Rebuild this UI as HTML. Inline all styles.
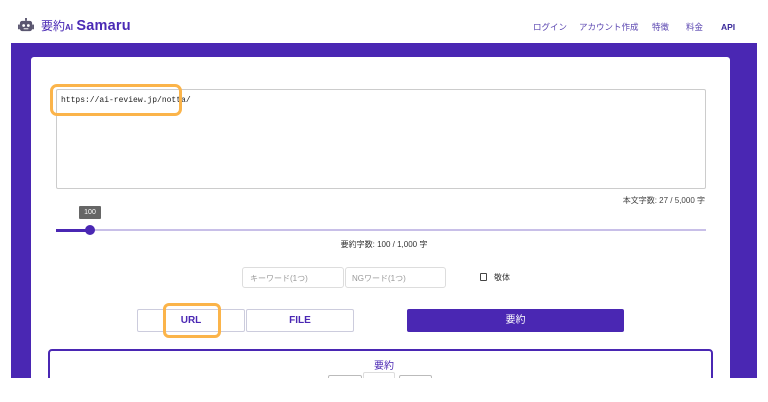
<!DOCTYPE html>
<html><head><meta charset="utf-8"><style>
*{margin:0;padding:0;box-sizing:border-box}
body{width:768px;height:402px;background:#fff;position:relative;overflow:hidden;font-family:"Liberation Sans","Noto Sans CJK JP",sans-serif}
.a{position:absolute}
.n{position:absolute;top:21px;font-size:8.5px;color:#5a45b0;white-space:nowrap;line-height:12px}
</style></head><body>
<svg class="a" style="left:18px;top:18px" width="16" height="15" viewBox="0 0 17 16"><rect x="7.5" y="0" width="2" height="3" fill="#5a5670"/><rect x="2" y="3" width="13" height="11" rx="2.5" fill="#5a5670"/><rect x="0" y="7" width="2" height="5" fill="#5a5670"/><rect x="15" y="7" width="2" height="5" fill="#5a5670"/><circle cx="6" cy="8" r="1.5" fill="#fff"/><circle cx="11" cy="8" r="1.5" fill="#fff"/><rect x="6" y="11" width="5" height="1" fill="#fff"/></svg>
<div class="a" style="left:41px;top:17px;font-size:12px;color:#4a2ab5;white-space:nowrap;line-height:18px">要約<b style="font-size:8px">AI</b> <b style="font-size:14.5px;letter-spacing:.2px">Samaru</b></div>
<div class="n" style="left:533px">ログイン</div>
<div class="n" style="left:579px">アカウント作成</div>
<div class="n" style="left:652px">特徴</div>
<div class="n" style="left:686px">料金</div>
<div class="n" style="left:721px;color:#3a2a9a;font-weight:bold">API</div>
<div class="a" style="left:11px;top:43px;width:746px;height:335px;background:#4a27b3"></div>
<div class="a" style="left:31px;top:57px;width:699px;height:321px;background:#fff;border-radius:3px 3px 0 0"></div>
<div class="a" style="left:56px;top:89px;width:650px;height:100px;border:1px solid #ccc;border-radius:2px"></div>
<div class="a" style="left:61px;top:96px;font-family:'Liberation Mono',monospace;font-size:8px;color:#222">https://ai-review.jp/notta/</div>
<div class="a" style="left:50px;top:84px;width:132px;height:32px;border:3px solid #fbb44a;border-radius:7px"></div>
<div class="a" style="right:63px;top:195px;font-size:8px;color:#444">本文字数: 27 / 5,000 字</div>
<div class="a" style="left:79px;top:206px;width:22px;height:13px;background:#666;color:#fff;font-size:7px;text-align:center;line-height:13px;border-radius:1px">100</div>
<div class="a" style="left:56px;top:229px;width:650px;height:2px;background:#c8bfe8"></div>
<div class="a" style="left:56px;top:229px;width:34px;height:3px;background:#4a27b3"></div>
<div class="a" style="left:85px;top:225px;width:10px;height:10px;border-radius:50%;background:#4a27b3"></div>
<div class="a" style="left:0;width:768px;top:239px;text-align:center;font-size:8px;color:#333">要約字数: 100 / 1,000 字</div>
<div class="a" style="left:242px;top:267px;width:102px;height:21px;border:1px solid #ddd;border-radius:3px;font-size:8px;color:#999;padding:5px 7px">キーワード(1つ)</div>
<div class="a" style="left:345px;top:267px;width:101px;height:21px;border:1px solid #ddd;border-radius:3px;font-size:8px;color:#999;padding:5px 6px">NGワード(1つ)</div>
<div class="a" style="left:480px;top:273px;width:7px;height:8px;border:1px solid #444;border-radius:1px"></div>
<div class="a" style="left:494px;top:272px;font-size:8px;color:#333">敬体</div>
<div class="a" style="left:137px;top:309px;width:108px;height:23px;border:1px solid #ccd;border-radius:2px;text-align:center;line-height:22px;font-size:10px;color:#4a27b3;font-weight:bold">URL</div>
<div class="a" style="left:246px;top:309px;width:108px;height:23px;border:1px solid #ccd;border-radius:2px;text-align:center;line-height:22px;font-size:10px;color:#4a27b3;font-weight:bold">FILE</div>
<div class="a" style="left:407px;top:309px;width:217px;height:23px;background:#4a27b3;border-radius:2px;text-align:center;line-height:23px;font-size:10px;color:#fff">要約</div>
<div class="a" style="left:163px;top:303px;width:58px;height:35px;border:3px solid #fbb44a;border-radius:6px"></div>
<div class="a" style="left:48px;top:349px;width:665px;height:40px;border:2px solid #4a27b3;border-radius:4px;background:#fff"></div>
<div class="a" style="left:0;width:768px;top:357px;text-align:center;font-size:10px;color:#4a27b3">要約</div>
<div class="a" style="left:328px;top:375px;width:34px;height:10px;border:1px solid #bbb;border-radius:2px"></div>
<div class="a" style="left:363px;top:372px;width:32px;height:10px;border:1px solid #ddd;border-radius:2px"></div>
<div class="a" style="left:399px;top:375px;width:33px;height:10px;border:1px solid #bbb;border-radius:2px"></div>
<div class="a" style="left:0;top:378px;width:768px;height:24px;background:#fff"></div>
</body></html>
